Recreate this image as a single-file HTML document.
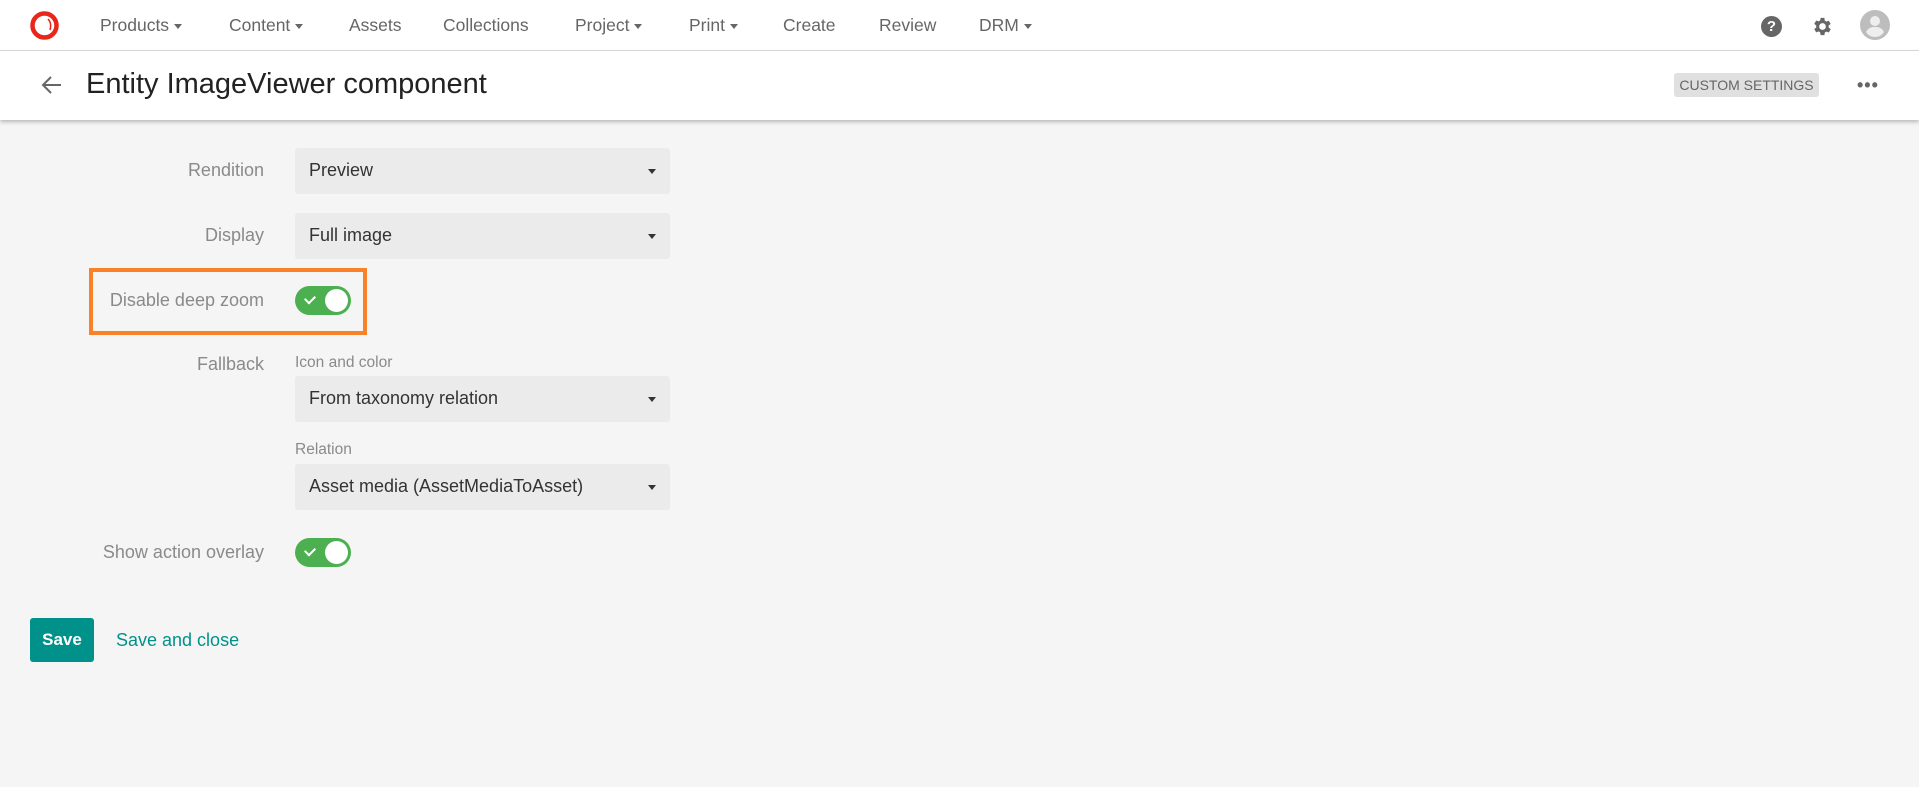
<!DOCTYPE html>
<html><head><meta charset="utf-8"><style>
*{box-sizing:border-box;margin:0;padding:0}
body{width:1919px;height:787px;background:#f5f5f5;font-family:"Liberation Sans",sans-serif;position:relative;overflow:hidden}
.nav{position:absolute;left:0;top:0;width:1919px;height:51px;background:#fff;border-bottom:1px solid #ddd}
.nav span.i{position:absolute;top:15px;font-size:17.5px;color:#666}
.car{display:inline-block;width:0;height:0;border-left:4px solid transparent;border-right:4px solid transparent;border-top:5px solid #666;vertical-align:middle;margin-left:5px}
.hdr{position:absolute;left:0;top:51px;width:1919px;height:69px;background:#fff;box-shadow:0 2px 4px rgba(0,0,0,.25)}
.lbl{position:absolute;right:1655px;font-size:18px;color:#8a8a8a;text-align:right;white-space:nowrap}
.sel{position:absolute;left:295px;width:375px;height:46px;background:#ebebeb;border-radius:3px;font-size:18px;color:#333;padding:12px 14px}
.sel:after{content:"";position:absolute;right:14px;top:21px;border-left:4px solid transparent;border-right:4px solid transparent;border-top:5px solid #333}
.tg{position:absolute;left:295px;width:56px;height:29px;border-radius:15px;background:#4caf50}
.tg:before{content:"";position:absolute;right:3px;top:3px;width:23px;height:23px;border-radius:50%;background:#fff}
.tg:after{content:"";position:absolute;left:10px;top:9px;width:8px;height:5px;border-left:2px solid #fff;border-bottom:2px solid #fff;transform:rotate(-45deg)}
.sm{position:absolute;left:295px;font-size:15.5px;color:#8a8a8a}
</style></head><body>
<div class="nav">
<svg style="position:absolute;left:30px;top:11px" width="29" height="29" viewBox="0 0 29 29"><circle cx="14.5" cy="14.5" r="12" fill="none" stroke="#e8261c" stroke-width="4.5"/><path d="M18 8 q4 4 2 11" stroke="#e8261c" stroke-width="1.5" fill="none"/></svg>
<span class="i" style="left:100px">Products<i class="car"></i></span>
<span class="i" style="left:229px">Content<i class="car"></i></span>
<span class="i" style="left:349px">Assets</span>
<span class="i" style="left:443px">Collections</span>
<span class="i" style="left:575px">Project<i class="car"></i></span>
<span class="i" style="left:689px">Print<i class="car"></i></span>
<span class="i" style="left:783px">Create</span>
<span class="i" style="left:879px">Review</span>
<span class="i" style="left:979px">DRM<i class="car"></i></span>
<div style="position:absolute;left:1761px;top:16px;width:21px;height:21px;border-radius:50%;background:#666;color:#fff;font-size:15px;font-weight:bold;text-align:center;line-height:21px">?</div>
<svg style="position:absolute;left:1811px;top:15px" width="23" height="23" viewBox="0 0 24 24"><path fill="#666" d="M19.4 13a7.5 7.5 0 0 0 0-2l2.1-1.6-2-3.5-2.5 1a7 7 0 0 0-1.7-1L15 3h-4l-.4 2.7a7 7 0 0 0-1.7 1l-2.5-1-2 3.5L6.5 11a7.5 7.5 0 0 0 0 2l-2.1 1.6 2 3.5 2.5-1a7 7 0 0 0 1.7 1L11 21h4l.4-2.7a7 7 0 0 0 1.7-1l2.5 1 2-3.5zM13 15.5a3.5 3.5 0 1 1 0-7 3.5 3.5 0 0 1 0 7z" transform="translate(-1 0)"/></svg>
<svg style="position:absolute;left:1860px;top:10px" width="30" height="30" viewBox="0 0 30 30"><circle cx="15" cy="15" r="15" fill="#bdbdbd"/><circle cx="15" cy="11" r="5" fill="#eee"/><path d="M6 22c2-4 5-5 9-5s7 1 9 5c-2 3-5 5-9 5s-7-2-9-5z" fill="#eee"/></svg>
</div>
<div class="hdr">
<svg style="position:absolute;left:41px;top:24px" width="22" height="20" viewBox="0 0 22 20"><path d="M20 10H3M10 2L2 10l8 8" stroke="#666" stroke-width="2" fill="none"/></svg>
<div style="position:absolute;left:86px;top:17px;font-size:29px;color:#222">Entity ImageViewer component</div>
<div style="position:absolute;left:1674px;top:22px;width:145px;height:24px;background:#e0e0e0;border-radius:3px;font-size:14px;color:#666;text-align:center;line-height:24px">CUSTOM SETTINGS</div>
<div style="position:absolute;left:1857px;top:24px;font-size:18px;color:#666;letter-spacing:1px;font-weight:bold">•••</div>
</div>
<div class="lbl" style="top:160px">Rendition</div>
<div class="sel" style="top:148px">Preview</div>
<div class="lbl" style="top:225px">Display</div>
<div class="sel" style="top:213px">Full image</div>
<div style="position:absolute;left:89px;top:268px;width:278px;height:67px;border:4px solid #f98128"></div>
<div class="lbl" style="top:290px">Disable deep zoom</div>
<div class="tg" style="top:286px"></div>
<div class="lbl" style="top:354px">Fallback</div>
<div class="sm" style="top:354px">Icon and color</div>
<div class="sel" style="top:376px">From taxonomy relation</div>
<div class="sm" style="top:441px">Relation</div>
<div class="sel" style="top:464px">Asset media (AssetMediaToAsset)</div>
<div class="lbl" style="top:542px">Show action overlay</div>
<div class="tg" style="top:538px"></div>
<div style="position:absolute;left:30px;top:618px;width:64px;height:44px;background:#00928a;border-radius:3px;color:#fff;font-weight:bold;font-size:17px;text-align:center;line-height:44px">Save</div>
<div style="position:absolute;left:116px;top:630px;font-size:18px;color:#00928a">Save and close</div>
</body></html>
